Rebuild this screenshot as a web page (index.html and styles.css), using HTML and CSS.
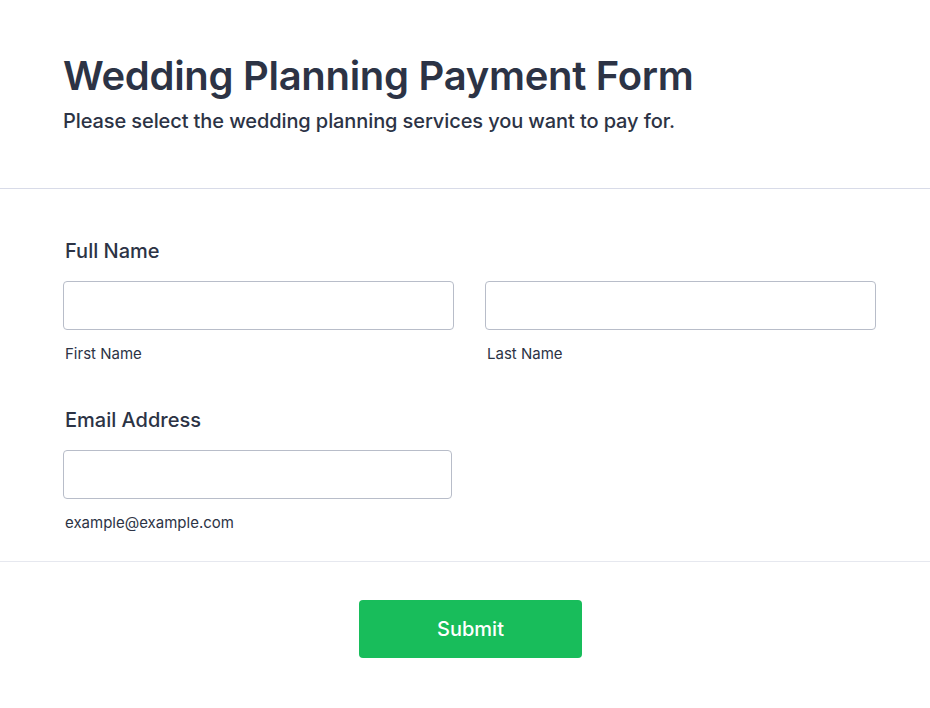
FILE: index.html
```html
<!DOCTYPE html>
<html lang="en">
<head>
<meta charset="utf-8">
<title>Wedding Planning Payment Form</title>
<link rel="stylesheet" href="styles.css">
</head>
<body>
<div class="page">
  <header class="form-header">
    <h1 class="form-title">Wedding Planning Payment Form</h1>
    <p class="form-subtitle">Please select the wedding planning services you want to pay for.</p>
  </header>
  <section class="form-body">
    <div class="field">
      <label class="field-label">Full Name</label>
      <div class="name-row">
        <div class="sub-field">
          <input class="text-input" type="text">
          <span class="sub-label">First Name</span>
        </div>
        <div class="sub-field">
          <input class="text-input" type="text">
          <span class="sub-label">Last Name</span>
        </div>
      </div>
    </div>
    <div class="field field-email">
      <label class="field-label">Email Address</label>
      <div class="sub-field email-field">
        <input class="text-input" type="email">
        <span class="sub-label">example@example.com</span>
      </div>
    </div>
  </section>
  <footer class="form-footer">
    <button class="submit-btn" type="button">Submit</button>
  </footer>
</div>
</body>
</html>
```

FILE: styles.css
```css
* { box-sizing: border-box; }
html, body { margin: 0; padding: 0; background: #ffffff; }
body {
  font-family: Inter, "Noto Sans", "Liberation Sans", sans-serif;
  color: #2c3345;
}
.page { width: 930px; }
.form-header {
  padding: 52px 54px 55px 63px;
  border-bottom: 1px solid #d8dbe8;
}
.form-title {
  margin: 0;
  font-size: 40px;
  line-height: 48px;
  font-weight: 600;
  letter-spacing: -0.3px;
  color: #2c3345;
}
.form-subtitle {
  margin: 9px 0 0 0;
  font-size: 20px;
  line-height: 24px;
  font-weight: 500;
  letter-spacing: -0.1px;
  color: #2c3345;
}
.form-body {
  padding: 50px 54px 29px 63px;
  border-bottom: 1px solid #e6e8ef;
}
.field { display: flex; flex-direction: column; }
.field-email { margin-top: 45px; }
.field-label {
  font-size: 20px;
  line-height: 24px;
  font-weight: 500;
  padding-left: 2px;
  margin-bottom: 18px;
}
.name-row {
  display: grid;
  grid-template-columns: 391px 391px;
  column-gap: 31px;
}
.sub-field { display: flex; flex-direction: column; }
.email-field { width: 389px; }
.text-input {
  height: 49px;
  width: 100%;
  border: 1px solid #b8bdc9;
  border-radius: 4px;
  background: #fff;
  margin: 0;
}
.sub-label {
  margin-top: 15px;
  padding-left: 2px;
  font-size: 15px;
  line-height: 18px;
  color: #2c3345;
}
.form-footer {
  display: flex;
  justify-content: center;
  padding: 38px 53px 40px 64px;
}
.submit-btn {
  width: 223px;
  height: 58px;
  border: none;
  border-radius: 4px;
  background: #18bd5b;
  color: #ffffff;
  font-family: Inter, "Noto Sans", sans-serif;
  font-size: 20px;
  font-weight: 500;
}
```
